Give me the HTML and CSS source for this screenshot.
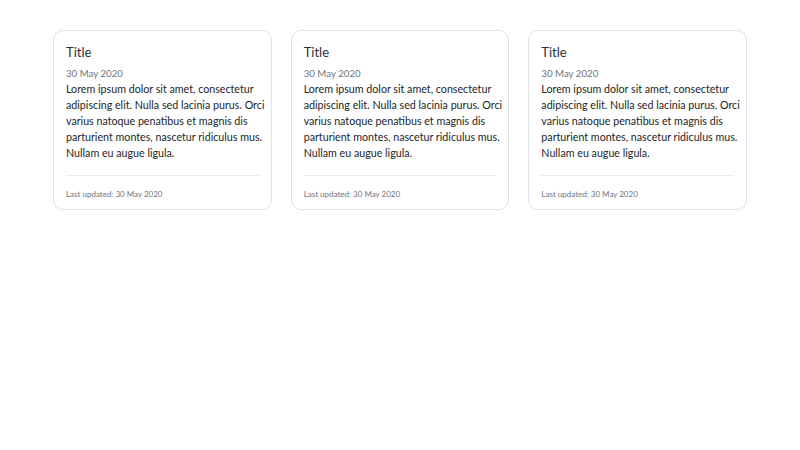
FILE: index.html
```html
<!DOCTYPE html>
<html>
<head>
<meta charset="utf-8">
<link rel="stylesheet" href="styles.css">
</head>
<body>
<div class="grid">
  <div class="card">
    <div class="title">Title</div>
    <div class="date">30 May 2020</div>
    <p class="text">Lorem ipsum dolor sit amet, consectetur adipiscing elit. Nulla sed lacinia purus. Orci varius natoque penatibus et magnis dis parturient montes, nascetur ridiculus mus. Nullam eu augue ligula.</p>
    <div class="footer">Last updated: 30 May 2020</div>
  </div>
  <div class="card">
    <div class="title">Title</div>
    <div class="date">30 May 2020</div>
    <p class="text">Lorem ipsum dolor sit amet, consectetur adipiscing elit. Nulla sed lacinia purus. Orci varius natoque penatibus et magnis dis parturient montes, nascetur ridiculus mus. Nullam eu augue ligula.</p>
    <div class="footer">Last updated: 30 May 2020</div>
  </div>
  <div class="card">
    <div class="title">Title</div>
    <div class="date">30 May 2020</div>
    <p class="text">Lorem ipsum dolor sit amet, consectetur adipiscing elit. Nulla sed lacinia purus. Orci varius natoque penatibus et magnis dis parturient montes, nascetur ridiculus mus. Nullam eu augue ligula.</p>
    <div class="footer">Last updated: 30 May 2020</div>
  </div>
</div>
</body>
</html>
```
FILE: styles.css
```css
html, body {
  margin: 0;
  background: #fff;
}
body {
  font-family: "Lato", "Noto Sans", sans-serif;
  color: #212529;
}
.grid {
  width: 694px;
  margin: 30px auto 0;
  display: grid;
  grid-template-columns: repeat(3, 1fr);
  gap: 19px;
}
.card {
  border: 1px solid #dee2e6;
  border-radius: 10px;
  padding: 12px 3px 8px 12px;
}
.title {
  font-size: 13px;
  line-height: 18px;
  color: #2b2f33;
}
.date {
  margin-top: 4px;
  font-size: 9.7px;
  line-height: 16px;
  color: #6c757d;
}
.text {
  margin: 0;
  font-size: 10.7px;
  line-height: 16px;
  color: #212529;
}
.footer {
  margin: 14px 9px 0 0;
  border-top: 1px solid #e9ecef;
  padding-top: 12px;
  font-size: 8px;
  line-height: 13px;
  color: #6c757d;
}
```
